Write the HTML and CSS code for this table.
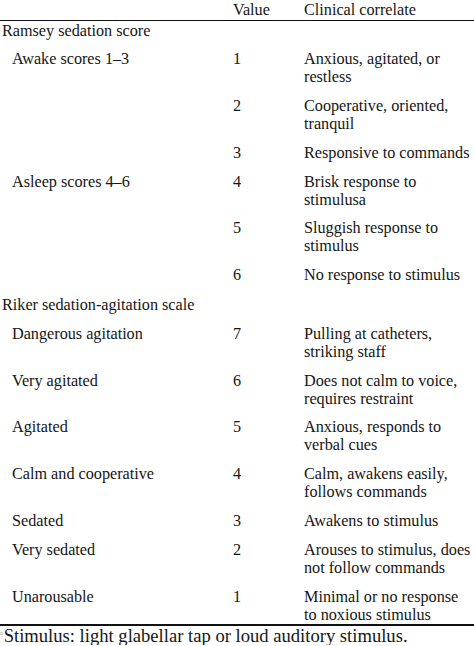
FILE: index.html
```html
<!DOCTYPE html>
<html>
<head>
<meta charset="utf-8">
<link rel="stylesheet" href="styles.css">
</head>
<body>
<div class="page">
<table class="scores">
  <colgroup>
    <col class="c-name">
    <col class="c-value">
    <col class="c-desc">
  </colgroup>
  <thead>
    <tr><th></th><th>Value</th><th>Clinical correlate</th></tr>
  </thead>
  <tbody>
    <tr class="section first"><td colspan="3">Ramsey sedation score</td></tr>
    <tr><td class="sub">Awake scores 1–3</td><td>1</td><td>Anxious, agitated, or<br>restless</td></tr>
    <tr><td></td><td>2</td><td>Cooperative, oriented,<br>tranquil</td></tr>
    <tr class="one"><td></td><td>3</td><td>Responsive to commands</td></tr>
    <tr><td class="sub">Asleep scores 4–6</td><td>4</td><td>Brisk response to<br>stimulusa</td></tr>
    <tr><td></td><td>5</td><td>Sluggish response to<br>stimulus</td></tr>
    <tr class="one"><td></td><td>6</td><td>No response to stimulus</td></tr>
    <tr class="section one"><td colspan="3">Riker sedation-agitation scale</td></tr>
    <tr><td class="sub">Dangerous agitation</td><td>7</td><td>Pulling at catheters,<br>striking staff</td></tr>
    <tr><td class="sub">Very agitated</td><td>6</td><td>Does not calm to voice,<br>requires restraint</td></tr>
    <tr><td class="sub">Agitated</td><td>5</td><td>Anxious, responds to<br>verbal cues</td></tr>
    <tr><td class="sub">Calm and cooperative</td><td>4</td><td>Calm, awakens easily,<br>follows commands</td></tr>
    <tr class="one"><td class="sub">Sedated</td><td>3</td><td>Awakens to stimulus</td></tr>
    <tr><td class="sub">Very sedated</td><td>2</td><td>Arouses to stimulus, does<br>not follow commands</td></tr>
    <tr class="last"><td class="sub">Unarousable</td><td>1</td><td>Minimal or no response<br>to noxious stimulus</td></tr>
  </tbody>
</table>
<p class="footnote"><sup class="mark">a</sup>Stimulus: light glabellar tap or loud auditory stimulus.</p>
</div>
</body>
</html>
```
FILE: styles.css
```css
html, body {
  margin: 0;
  padding: 0;
  background: #ffffff;
}
body {
  width: 474px;
  height: 646px;
  overflow: hidden;
  font-family: "Liberation Serif", "Times New Roman", serif;
  font-size: 16.2px;
  line-height: 18px;
  color: #161616;
}
.page {
  width: 474px;
  overflow: hidden;
}
.scores {
  width: 620px;
  table-layout: fixed;
  border-collapse: collapse;
  border-spacing: 0;
}
.c-name { width: 233px; }
.c-value { width: 71px; }
.c-desc { width: 316px; }
.scores th,
.scores td {
  padding: 5.3px 0;
  text-align: left;
  vertical-align: top;
  font-weight: normal;
  white-space: nowrap;
}
.scores tr.one td {
  padding-top: 5.8px;
  padding-bottom: 5.8px;
}
.scores thead th {
  padding: 1px 0;
  border-bottom: 1px solid #111;
}
.scores tr.section td {
  padding-left: 2px;
}
.scores tr.section.first td {
  padding-top: 1px;
  padding-bottom: 4.7px;
}
.scores td.sub {
  padding-left: 12px;
}
.scores tr.last td {
  padding-bottom: 0;
  border-bottom: 2px solid #111;
}
.footnote {
  margin: 0;
  font-size: 18.6px;
  line-height: 19px;
  white-space: nowrap;
}
.mark {
  font-size: 6px;
  line-height: 0;
  vertical-align: 7px;
  color: #888;
  margin-right: 1px;
}
```
